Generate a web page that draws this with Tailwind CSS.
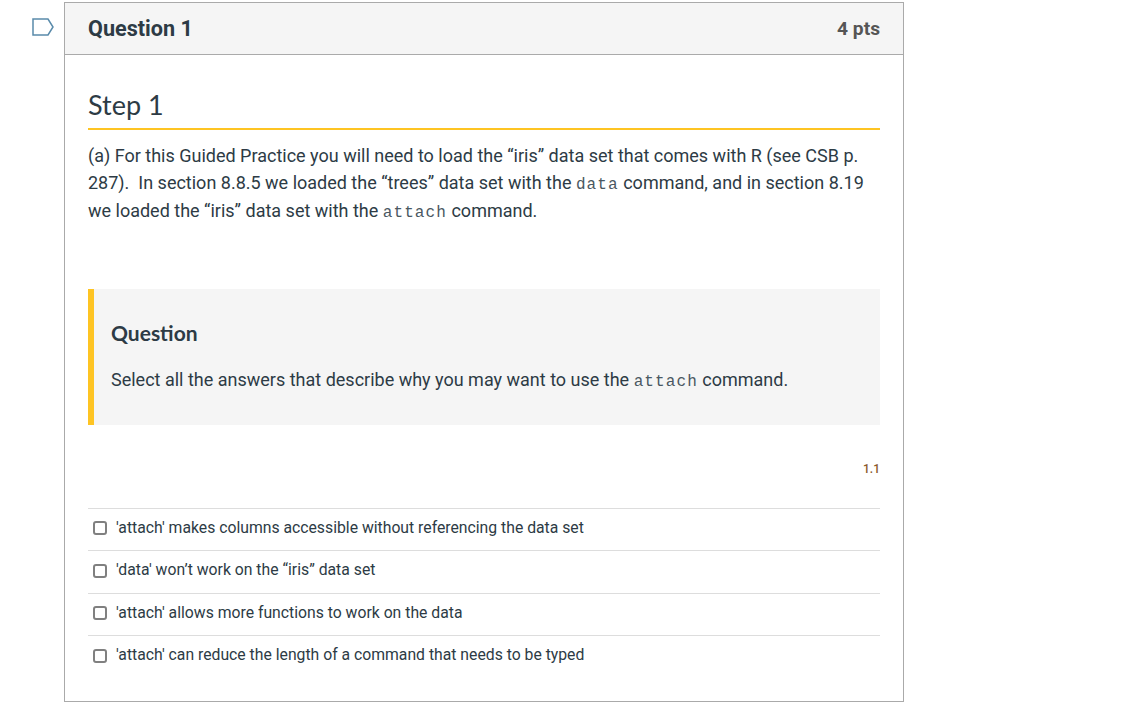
<!DOCTYPE html>
<html lang="en">
<head>
  <meta charset="UTF-8" />
  <title>Question 1</title>
  <script src="https://cdn.jsdelivr.net/npm/@tailwindcss/browser@4"></script>
</head>
<body class="bg-white font-['Roboto',sans-serif] text-[#2d3b45]">
  <div class="flex items-start pt-[2px] w-[1138px] h-[719px] overflow-hidden">
    <!-- flag -->
    <div class="w-[64px] pl-[32px] pt-[16px] shrink-0">
      <svg width="22" height="18" viewBox="0 0 22 18" fill="none"><path d="M1 1H16L21 9L16 17H1Z" fill="#fff" stroke="#5a8bab" stroke-width="1.5"/></svg>
    </div>

    <div class="w-[840px] h-[700px] border border-[#aaaaaa] shrink-0">
      <div class="h-[52px] bg-[#f5f5f5] border-b border-[#aaaaaa] flex items-center justify-between px-[23px] pt-[1px]">
        <h2 class="text-[21.6px] font-bold">Question 1</h2>
        <span class="text-[19.2px] font-bold text-[#555]">4 pts</span>
      </div>

      <div class="px-[23px]">
        <h3 class="font-['Lato',sans-serif] text-[27px] leading-[33px] mt-[33px] pb-[7px] border-b-2 border-[#fec423]">Step 1</h3>
        <p class="text-[18px] leading-[27.8px] mt-[11.5px]">
          (a) For this Guided Practice you will need to load the “iris” data set that comes with R (see CSB p. 287).&nbsp; In section 8.8.5 we loaded the “trees” data set with the <code class="font-['Liberation_Mono',monospace] text-[16px] tracking-[1.1px] text-[#4a5862] leading-none">data</code> command, and in section 8.19 we loaded the “iris” data set with the <code class="font-['Liberation_Mono',monospace] text-[16px] tracking-[1.1px] text-[#4a5862] leading-none">attach</code> command.
        </p>

        <div class="mt-[64.1px] h-[136px] bg-[#f5f5f5] border-l-[6px] border-[#fec423] px-[17px] pt-[30px]">
          <h4 class="font-['Lato',sans-serif] font-bold text-[21px] leading-[28px]">Question</h4>
          <p class="text-[18px] leading-[27px] mt-[19px]">Select all the answers that describe why you may want to use the <code class="font-['Liberation_Mono',monospace] text-[16px] tracking-[1.1px] text-[#4a5862] leading-none">attach</code> command.</p>
        </div>

        <div class="text-right text-[12px] font-medium text-[#8b5a2b] mt-[36px] leading-[16px]">1.1</div>

        <ul class="mt-[30.75px] text-[15.75px]">
          <li class="h-[42.5px] border-t border-[#dddddd] flex items-center gap-[9px] pl-[5px]">
            <span class="w-[14px] h-[14px] border-2 border-[#808080] rounded-[3px] mb-[2px] shrink-0"></span>
            <span class="mb-[4px]">'attach' makes columns accessible without referencing the data set</span>
          </li>
          <li class="h-[42.5px] border-t border-[#dddddd] flex items-center gap-[9px] pl-[5px]">
            <span class="w-[14px] h-[14px] border-2 border-[#808080] rounded-[3px] mb-[2px] shrink-0"></span>
            <span class="mb-[4px]">'data' won’t work on the “iris” data set</span>
          </li>
          <li class="h-[42.5px] border-t border-[#dddddd] flex items-center gap-[9px] pl-[5px]">
            <span class="w-[14px] h-[14px] border-2 border-[#808080] rounded-[3px] mb-[2px] shrink-0"></span>
            <span class="mb-[4px]">'attach' allows more functions to work on the data</span>
          </li>
          <li class="h-[42.5px] border-t border-[#dddddd] flex items-center gap-[9px] pl-[5px]">
            <span class="w-[14px] h-[14px] border-2 border-[#808080] rounded-[3px] mb-[2px] shrink-0"></span>
            <span class="mb-[4px]">'attach' can reduce the length of a command that needs to be typed</span>
          </li>
        </ul>
      </div>
    </div>
  </div>
</body>
</html>
